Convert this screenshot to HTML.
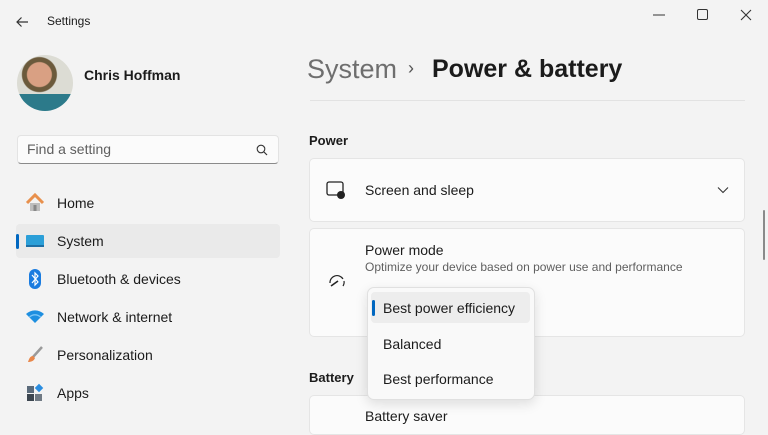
<!DOCTYPE html>
<html><head><style>
*{margin:0;padding:0;box-sizing:border-box}
body{width:768px;height:419px;overflow:hidden;background:#f3f3f3;font-family:"Segoe UI","Liberation Sans",sans-serif;color:#1b1b1b;position:relative;font-size:14px}
.abs{position:absolute}
.nav{position:absolute;left:57px;font-size:14px}
.ic{position:absolute;left:25px;width:20px;height:20px}
.card{position:absolute;left:309px;width:436px;background:#fbfbfb;border:1px solid #e5e5e5;border-radius:5px}
</style></head><body>
<svg class="abs" style="left:15px;top:15px" width="14" height="14" viewBox="0 0 14 14"><path d="M13 7H2M6.5 2.5L2 7l4.5 4.5" stroke="#333" stroke-width="1.2" fill="none"/></svg>
<div class="abs" style="left:47px;top:14px;font-size:12px">Settings</div>
<svg class="abs" style="left:653px;top:14px" width="12" height="2"><rect width="12" height="1" y="0.5" fill="#333"/></svg>
<div class="abs" style="left:697px;top:9px;width:11px;height:11px;border:1px solid #333;border-radius:2px"></div>
<svg class="abs" style="left:740px;top:9px" width="12" height="12"><path d="M1 1l10 10M11 1L1 11" stroke="#333" stroke-width="1.1"/></svg>

<div class="abs" style="left:17px;top:55px;width:56px;height:56px;border-radius:50%;background:radial-gradient(circle at 40% 35%,#d9a083 0 12px,#6b5a3c 13px 17px,transparent 18px),linear-gradient(#dcdcd4 0 70%,#2c7a8a 70%);overflow:hidden"></div>
<div class="abs" style="left:84px;top:67px;font-size:14px;font-weight:600">Chris Hoffman</div>

<div class="abs" style="left:17px;top:135px;width:262px;height:29px;background:#fbfbfb;border:1px solid #e3e3e3;border-bottom:1px solid #8a8a8a;border-radius:4px"></div>
<div class="abs" style="left:27px;top:141px;color:#5f5f5f">Find a setting</div>
<svg class="abs" style="left:256px;top:144px" width="12" height="12"><circle cx="5" cy="5" r="3.8" stroke="#333" stroke-width="1.1" fill="none"/><path d="M8 8l3 3" stroke="#333" stroke-width="1.2"/></svg>

<div class="abs" style="left:16px;top:224px;width:264px;height:34px;background:#eaeaea;border-radius:4px"></div>
<div class="abs" style="left:16px;top:234px;width:3px;height:15px;background:#0067c0;border-radius:2px"></div>

<svg class="ic" style="top:193px" viewBox="0 0 20 20"><path d="M2 10L10 2l8 8" stroke="#e8904c" stroke-width="3" fill="none"/><rect x="5" y="10" width="10" height="8" fill="#bdbdbd"/><rect x="8.5" y="12" width="3" height="6" fill="#888"/></svg>
<div class="nav" style="top:195px">Home</div>
<svg class="ic" style="top:231px" viewBox="0 0 20 20"><rect x="1" y="4" width="18" height="12" rx="1" fill="#2b9fd8"/><rect x="1" y="14" width="18" height="2" fill="#1d6fa5"/></svg>
<div class="nav" style="top:233px">System</div>
<svg class="ic" style="top:269px" viewBox="0 0 20 20"><rect x="4" y="0" width="12" height="20" rx="6" fill="#1a7ce0"/><path d="M7 6l6 7-3 3V4l3 3-6 7" stroke="#fff" stroke-width="1.2" fill="none"/></svg>
<div class="nav" style="top:271px">Bluetooth &amp; devices</div>
<svg class="ic" style="top:307px" viewBox="0 0 20 20"><path d="M1 7a13 13 0 0 1 18 0L10 16z" fill="#1e8fe0"/><path d="M4.5 10a8 8 0 0 1 11 0" stroke="#7cc6f7" stroke-width="1.3" fill="none"/></svg>
<div class="nav" style="top:309px">Network &amp; internet</div>
<svg class="ic" style="top:345px" viewBox="0 0 20 20"><path d="M17 2L8 12" stroke="#9a9a9a" stroke-width="2.5"/><path d="M8 11c-3 0-4 3-5 6 3 0 6-1 7-4z" fill="#e8874a"/></svg>
<div class="nav" style="top:347px">Personalization</div>
<svg class="ic" style="top:383px" viewBox="0 0 20 20"><rect x="2" y="3" width="7" height="7" fill="#5a6a7a"/><rect x="2" y="11" width="7" height="7" fill="#3c4650"/><rect x="10" y="11" width="7" height="7" fill="#707a84"/><rect x="11" y="2" width="6" height="6" fill="#2a8de0" transform="rotate(45 14 5)"/></svg>
<div class="nav" style="top:385px">Apps</div>

<div class="abs" style="left:307px;top:54px;font-size:27px;color:#6e6e6e">System</div>
<div class="abs" style="left:408px;top:58px;font-size:18px;color:#555">›</div>
<div class="abs" style="left:432px;top:55px;font-size:25px;font-weight:700;color:#1b1b1b">Power &amp; battery</div>
<div class="abs" style="left:310px;top:100px;width:435px;height:1px;background:#e2e2e2"></div>
<div class="abs" style="left:309px;top:133px;font-size:13px;font-weight:600">Power</div>

<div class="card" style="top:158px;height:64px"></div>
<svg class="abs" style="left:326px;top:181px" width="20" height="18" viewBox="0 0 20 18"><rect x="1" y="1" width="16" height="13" rx="2" stroke="#222" stroke-width="1.3" fill="none"/><circle cx="15" cy="14" r="4" fill="#222"/></svg>
<div class="abs" style="left:365px;top:182px">Screen and sleep</div>
<svg class="abs" style="left:717px;top:186px" width="12" height="8"><path d="M1 1.5l5 5 5-5" stroke="#333" stroke-width="1.1" fill="none"/></svg>

<div class="card" style="top:228px;height:109px"></div>
<svg class="abs" style="left:328px;top:274px" width="18" height="14" viewBox="0 0 18 14"><path d="M2 9a7 7 0 0 1 13-4M16 7a7 7 0 0 1-1 5" stroke="#222" stroke-width="1.2" fill="none"/><path d="M3 12l7-5" stroke="#222" stroke-width="1.6"/></svg>
<div class="abs" style="left:365px;top:242px">Power mode</div>
<div class="abs" style="left:365px;top:260px;font-size:12px;color:#5f5f5f">Optimize your device based on power use and performance</div>

<div class="abs" style="left:309px;top:370px;font-size:13px;font-weight:600">Battery</div>
<div class="card" style="top:395px;height:40px"></div>
<div class="abs" style="left:365px;top:408px">Battery saver</div>

<div class="abs" style="left:367px;top:287px;width:168px;height:113px;background:#f9f9f9;border:1px solid #e0e0e0;border-radius:7px;box-shadow:0 4px 12px rgba(0,0,0,.12)"></div>
<div class="abs" style="left:371px;top:292px;width:159px;height:31px;background:#ededed;border-radius:4px"></div>
<div class="abs" style="left:372px;top:300px;width:3px;height:16px;background:#0067c0;border-radius:2px"></div>
<div class="abs" style="left:383px;top:300px">Best power efficiency</div>
<div class="abs" style="left:383px;top:336px">Balanced</div>
<div class="abs" style="left:383px;top:371px">Best performance</div>

<div class="abs" style="left:763px;top:210px;width:2px;height:50px;background:#8a8a8a;border-radius:1px"></div>
</body></html>
